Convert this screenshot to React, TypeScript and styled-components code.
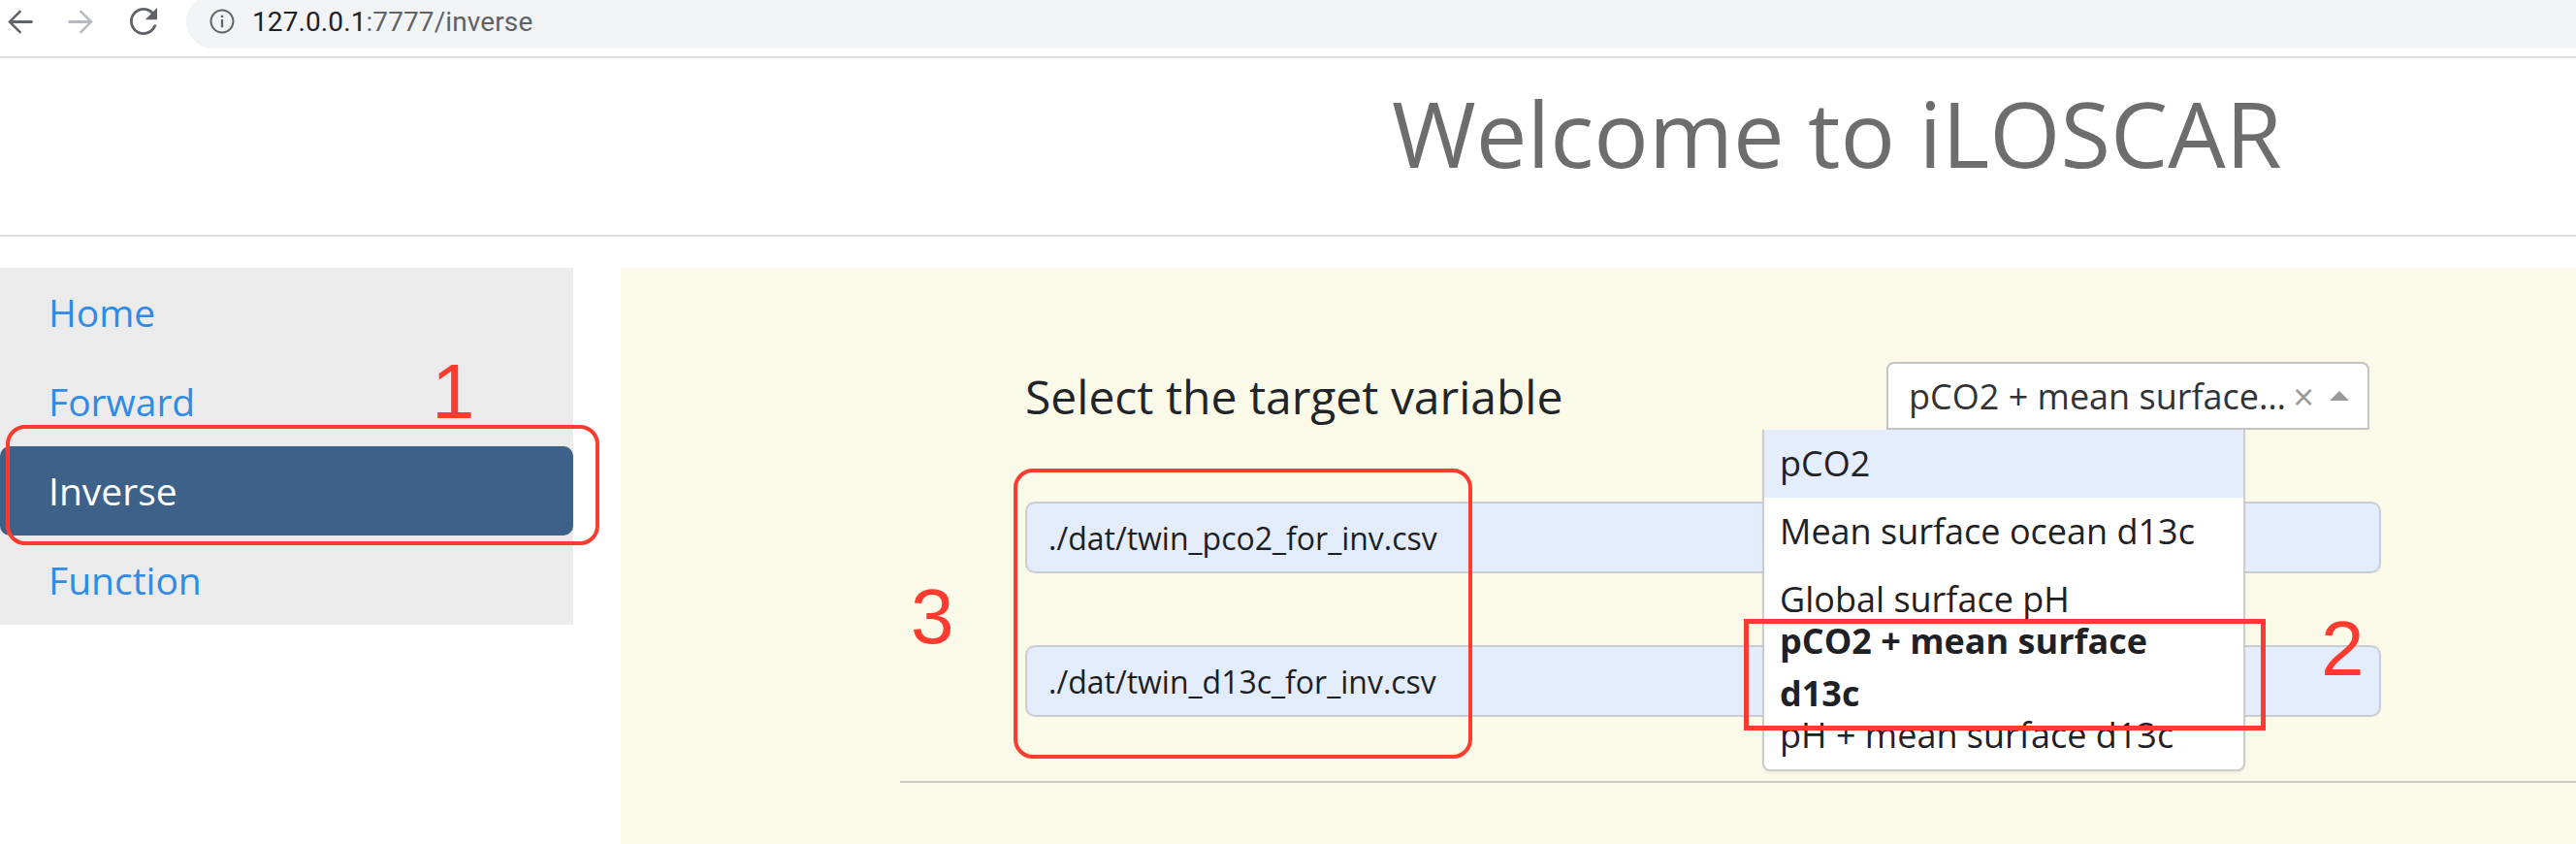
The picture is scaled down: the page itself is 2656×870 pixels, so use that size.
import React from "react"
import styled, { createGlobalStyle } from "styled-components"

const RED = "#ff3b30"

const GlobalStyle = createGlobalStyle`
  html, body {
    margin: 0;
    padding: 0;
    overflow: hidden;
    background: #fff;
  }
  body {
    font-family: "Open Sans", "Noto Sans", sans-serif;
  }
  * {
    box-sizing: border-box;
  }
`

const navItems = ["Home", "Forward", "Inverse", "Function"]
const options = [
  "pCO2",
  "Mean surface ocean d13c",
  "Global surface pH",
  "pCO2 + mean surface d13c",
  "pH + mean surface d13c",
]
const SELECTED = "pCO2 + mean surface d13c"
const files = ["./dat/twin_pco2_for_inv.csv", "./dat/twin_d13c_for_inv.csv"]

const BackIcon = () => (
  <svg width="39" height="39" viewBox="0 0 24 24" fill="#5f6368">
    <path d="M20 11.1H7.5l5.6-5.6L12 4.4l-7.6 7.6 7.6 7.6 1.1-1.1-5.6-5.6H20z" />
  </svg>
)

const ForwardIcon = () => (
  <svg width="39" height="39" viewBox="0 0 24 24" fill="#b6b9bd">
    <path d="M12 4.4l-1.1 1.1 5.6 5.6H4v1.8h12.5l-5.6 5.6 1.1 1.1 7.6-7.6z" />
  </svg>
)

const ReloadIcon = () => (
  <svg width="42" height="42" viewBox="0 0 24 24" fill="#5f6368">
    <path d="M17.65 6.35A7.958 7.958 0 0 0 12 4c-4.42 0-7.99 3.58-7.99 8s3.57 8 7.99 8c3.73 0 6.840-2.55 7.73-6h-1.7A6.3 6.3 0 0 1 12 18.4c-3.5 0-6.4-2.9-6.4-6.4s2.9-6.4 6.4-6.4c1.76 0 3.3.72 4.45 1.9L13 11h7V4l-2.35 2.35z" />
  </svg>
)

const InfoIcon = () => (
  <svg width="30" height="30" viewBox="0 0 24 24" fill="#5f6368">
    <path d="M11.1 7h1.8v1.8h-1.8zm0 3.4h1.8v6.6h-1.8zM12 2C6.48 2 2 6.480 2 12s4.48 10 10 10 10-4.48 10-10S17.52 2 12 2zm0 18.4c-4.63 0-8.4-3.77-8.4-8.4S7.37 3.6 12 3.6s8.4 3.77 8.4 8.4-3.77 8.4-8.4 8.4z" />
  </svg>
)

const App: React.FC = () => {
  return (
    <Page>
      <GlobalStyle />
      <BrowserBar>
        <BarRow>
          <IconSlot>
            <BackIcon />
          </IconSlot>
          <IconSlot>
            <ForwardIcon />
          </IconSlot>
          <IconSlot>
            <ReloadIcon />
          </IconSlot>
          <AddressPill>
            <InfoIcon />
            <Url>
              <UrlHost>127.0.0.1</UrlHost>:7777/inverse
            </Url>
          </AddressPill>
        </BarRow>
      </BrowserBar>

      <Header>
        <Title>Welcome to iLOSCAR</Title>
      </Header>

      <Body>
        <Sidebar>
          {navItems.map(item => (
            <NavItem key={item} $active={item === "Inverse"}>
              {item}
            </NavItem>
          ))}
        </Sidebar>

        <Panel>
          <Form>
            <TargetRow>
              <Label>Select the target variable</Label>
              <SelectWrap>
                <Control>
                  <Value>{SELECTED}</Value>
                  <Clear>×</Clear>
                  <Arrow />
                </Control>
                <Menu>
                  {options.map((opt, i) => (
                    <Option key={opt} $focused={i === 0} $selected={opt === SELECTED}>
                      {opt}
                    </Option>
                  ))}
                </Menu>
              </SelectWrap>
            </TargetRow>
            <InputList>
              {files.map(f => (
                <FileInput key={f} readOnly value={f} />
              ))}
            </InputList>
          </Form>
          <Divider />
        </Panel>
      </Body>

      <Mark $x={6} $y={438} $w={612} $h={124} $stroke={4} $radius={20} />
      <Mark $x={1798} $y={638} $w={538} $h={115} $stroke={5} $radius={0} />
      <Mark $x={1045} $y={483} $w={473} $h={299} $stroke={4} $radius={20} />
      <MarkDigit $x={445} $y={364}>1</MarkDigit>
      <MarkDigit $x={2393} $y={629}>2</MarkDigit>
      <MarkDigit $x={939} $y={596}>3</MarkDigit>
    </Page>
  )
}

const Page = styled.div`
  position: relative;
  height: 100vh;
  display: flex;
  flex-direction: column;
  overflow: hidden;
`

const BrowserBar = styled.div`
  flex: none;
  height: 60px;
  border-bottom: 2px solid #dcdcdc;
  background: #fff;
  overflow: hidden;
`

const BarRow = styled.div`
  height: 44px;
  display: flex;
  align-items: center;
  gap: 24px;
  padding-left: 1px;
`

const IconSlot = styled.div`
  flex: none;
  display: flex;
  align-items: center;
  justify-content: center;
`

const AddressPill = styled.div`
  flex: 1;
  height: 56px;
  margin-left: -1px;
  border-radius: 28px 0 0 28px;
  background: #f1f3f4;
  display: flex;
  align-items: center;
  gap: 16px;
  padding-left: 22px;
`

const Url = styled.span`
  font-family: Roboto, "Liberation Sans", sans-serif;
  font-size: 28px;
  color: #5f6368;
  letter-spacing: 0.1px;
`

const UrlHost = styled.span`
  color: #202124;
`

const Header = styled.header`
  flex: none;
  height: 184px;
  border-bottom: 2px solid #dedede;
  padding: 13px 0 0 1435px;
`

const Title = styled.h1`
  margin: 0;
  font-size: 94px;
  font-weight: 400;
  line-height: normal;
  color: #6d6d6d;
  white-space: nowrap;
`

const Body = styled.div`
  flex: 1;
  display: flex;
  align-items: flex-start;
  gap: 49px;
  margin-top: 32px;
`

const Sidebar = styled.nav`
  flex: none;
  width: 591px;
  background: #ebebeb;
  display: flex;
  flex-direction: column;
`

const NavItem = styled.a<{ $active?: boolean }>`
  display: block;
  height: 92px;
  line-height: 92px;
  padding-left: 50px;
  font-size: 39px;
  border-radius: 10px;
  color: ${({ $active }) => ($active ? "#ffffff" : "#2f8be6")};
  background: ${({ $active }) => ($active ? "#3e6189" : "transparent")};
  cursor: pointer;
`

const Panel = styled.main`
  flex: 1;
  align-self: stretch;
  background: #fbf9e8;
  padding: 97px 0 0 288px;
`

const Form = styled.div`
  padding: 0 201px 0 129px;
`

const TargetRow = styled.div`
  height: 70px;
  display: flex;
  align-items: center;
  justify-content: space-between;
`

const Label = styled.label`
  font-size: 48px;
  color: #212529;
`

const SelectWrap = styled.div`
  position: relative;
  width: 498px;
  margin-right: 12px;
  z-index: 2;
`

const Control = styled.div`
  height: 70px;
  background: #fff;
  border: 2px solid #c4c4c4;
  border-radius: 8px 8px 0 0;
  display: flex;
  align-items: center;
  padding: 0 19px 0 21px;
`

const Value = styled.span`
  flex: none;
  width: 396px;
  white-space: nowrap;
  overflow: hidden;
  text-overflow: ellipsis;
  font-size: 36px;
  color: #333;
`

const Clear = styled.span`
  flex: none;
  width: 22px;
  text-align: center;
  font-size: 38px;
  line-height: 1;
  color: #999;
`

const Arrow = styled.span`
  flex: none;
  margin-left: 16px;
  width: 0;
  height: 0;
  border-style: solid;
  border-width: 0 10px 10px;
  border-color: transparent transparent #999;
`

const Menu = styled.div`
  position: absolute;
  top: 100%;
  left: -128px;
  width: 498px;
  background: #fff;
  border: 2px solid #cccccc;
  border-top: none;
  border-radius: 0 0 8px 8px;
  box-shadow: 0 2px 3px rgba(0, 0, 0, 0.06);
`

const Option = styled.div<{ $focused?: boolean; $selected?: boolean }>`
  height: 70px;
  display: flex;
  align-items: center;
  padding: 0 28px 0 16px;
  font-size: 36px;
  line-height: 54px;
  color: #1f2125;
  font-weight: ${({ $selected }) => ($selected ? 700 : 400)};
  background: ${({ $focused }) => ($focused ? "#e3edfb" : "transparent")};
`

const InputList = styled.div`
  margin-top: 74px;
  display: flex;
  flex-direction: column;
  gap: 74px;
`

const FileInput = styled.input`
  display: block;
  width: 100%;
  height: 74px;
  margin: 0;
  padding: 0 22px;
  border: 2px solid #c9cdd3;
  border-radius: 10px;
  background: #e3ecfa;
  font-family: "Open Sans", "Noto Sans", sans-serif;
  font-size: 32px;
  color: #1e1e1e;
  outline: none;
`

const Divider = styled.hr`
  margin: 66px 0 0;
  height: 2px;
  border: none;
  background: #cacac2;
`

const Mark = styled.div<{
  $x: number
  $y: number
  $w: number
  $h: number
  $stroke: number
  $radius: number
}>`
  position: absolute;
  left: ${({ $x }) => $x}px;
  top: ${({ $y }) => $y}px;
  width: ${({ $w }) => $w}px;
  height: ${({ $h }) => $h}px;
  border: ${({ $stroke }) => $stroke}px solid ${RED};
  border-radius: ${({ $radius }) => $radius}px;
  z-index: 5;
  pointer-events: none;
`

const MarkDigit = styled.span<{ $x: number; $y: number }>`
  position: absolute;
  left: ${({ $x }) => $x}px;
  top: ${({ $y }) => $y}px;
  font-family: "Liberation Sans", Arial, sans-serif;
  font-size: 80px;
  line-height: 1;
  color: ${RED};
  z-index: 5;
`

export default App
